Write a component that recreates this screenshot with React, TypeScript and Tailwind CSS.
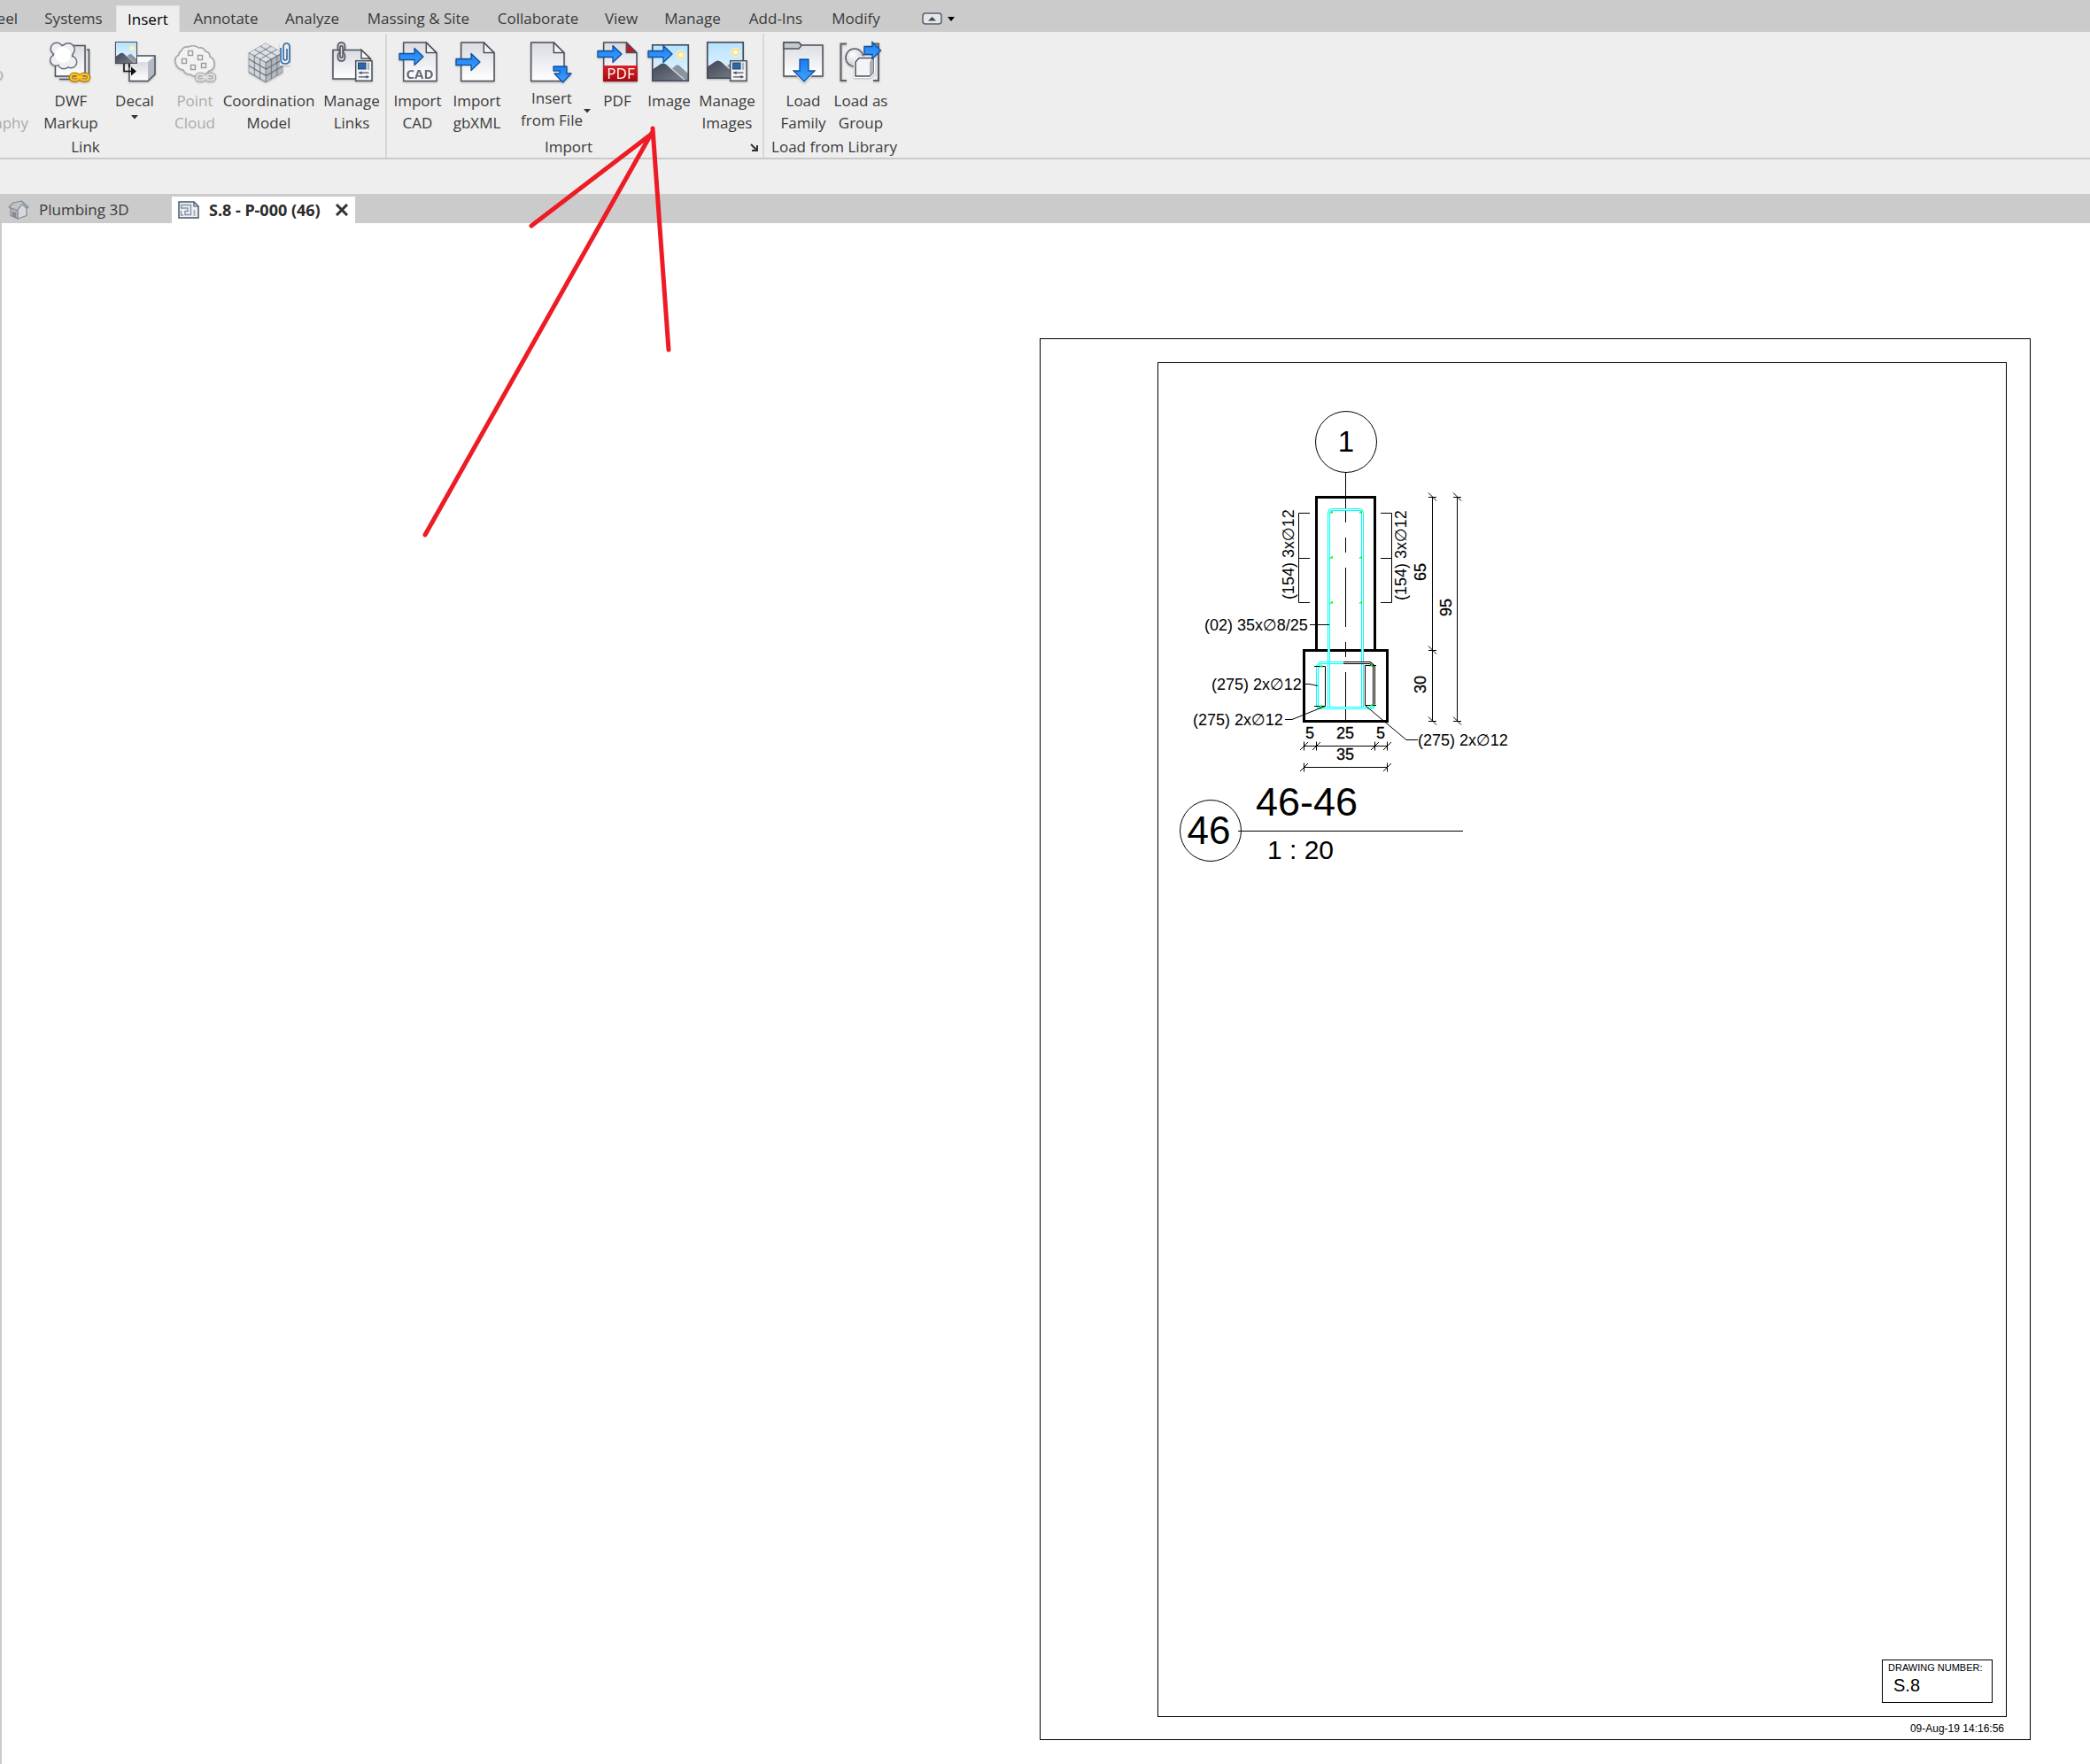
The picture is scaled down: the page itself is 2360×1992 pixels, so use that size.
import type { ReactNode } from 'react';
import { clsx } from 'clsx';

type RibbonTab = { label: string; width: string };

const ribbonTabs: RibbonTab[] = [
  { label: 'Systems', width: 'w-[96px]' },
  { label: 'Insert', width: 'w-[72px]' },
  { label: 'Annotate', width: 'w-[104px]' },
  { label: 'Analyze', width: 'w-[91px]' },
  { label: 'Massing & Site', width: 'w-[149px]' },
  { label: 'Collaborate', width: 'w-[121px]' },
  { label: 'View', width: 'w-[67px]' },
  { label: 'Manage', width: 'w-[94px]' },
  { label: 'Add-Ins', width: 'w-[94px]' },
  { label: 'Modify', width: 'w-[87px]' },
];

/* Shared gradients for the ribbon icons */
function IconDefs() {
  return (
    <svg width="0" height="0" className="absolute" aria-hidden="true">
      <defs>
        <linearGradient id="paper" x1="0" y1="0" x2="0" y2="1">
          <stop offset="0" stopColor="#d9dbe1" />
          <stop offset="1" stopColor="#ffffff" />
        </linearGradient>
        <linearGradient id="blue" x1="0" y1="0" x2="0" y2="1">
          <stop offset="0" stopColor="#1b7cf0" />
          <stop offset="1" stopColor="#3fa2ff" />
        </linearGradient>
        <linearGradient id="sky" x1="0" y1="0" x2="0" y2="1">
          <stop offset="0" stopColor="#b5e2ff" />
          <stop offset="1" stopColor="#eaf7ff" />
        </linearGradient>
        <linearGradient id="rock" x1="0" y1="0" x2="1" y2="1">
          <stop offset="0" stopColor="#3f4553" />
          <stop offset="1" stopColor="#7c828f" />
        </linearGradient>
        <linearGradient id="red" x1="0" y1="0" x2="0" y2="1">
          <stop offset="0" stopColor="#d92127" />
          <stop offset="1" stopColor="#a30c10" />
        </linearGradient>
        <radialGradient id="ball" cx="0.4" cy="0.35" r="0.7">
          <stop offset="0" stopColor="#ffffff" />
          <stop offset="1" stopColor="#c3c7d0" />
        </radialGradient>
      </defs>
    </svg>
  );
}

function Icon({ children, faded }: { children: ReactNode; faded?: boolean }) {
  return (
    <svg
      viewBox="0 0 48 48"
      aria-hidden="true"
      fill="none"
      className={clsx('size-12 shrink-0 overflow-visible drop-shadow-[0_1px_1px_rgba(0,0,0,0.25)]', faded && 'opacity-70')}
    >
      {children}
    </svg>
  );
}

function ArrowRight({ x, y }: { x: number; y: number }) {
  return (
    <path
      d="M0 6.5h17V0.5l10 9.5-10 9.5v-6H0z"
      transform={`translate(${x} ${y})`}
      fill="url(#blue)"
      stroke="#0f4f9c"
      strokeWidth="1.3"
      strokeLinejoin="round"
    />
  );
}

function Page({ x, fold = 'url(#paper)' }: { x: number; fold?: string }) {
  return (
    <g transform={`translate(${x} 0)`} stroke="#4a4f5a" strokeWidth="1.5" strokeLinejoin="round">
      <path d="M0.7 2h25.6L38 14v31.4H0.7z" fill="url(#paper)" />
      <path d="M26.3 2v11.6H38z" fill={fold} />
    </g>
  );
}

function Chain({ x, y, color, inner }: { x: number; y: number; color: string; inner: string }) {
  return (
    <g transform={`translate(${x} ${y})`}>
      <g stroke={color} strokeWidth="4.4">
        <rect x="2" y="2" width="9" height="6.5" rx="3" />
        <rect x="13" y="2" width="9" height="6.5" rx="3" />
        <path d="M8 5.2h8" />
      </g>
      <g stroke={inner} strokeWidth="2">
        <rect x="2" y="2" width="9" height="6.5" rx="3" />
        <rect x="13" y="2" width="9" height="6.5" rx="3" />
        <path d="M8 5.2h8" />
      </g>
    </g>
  );
}

function Properties({ x, y }: { x: number; y: number }) {
  return (
    <g transform={`translate(${x} ${y})`}>
      <rect x="0.7" y="0.7" width="18.3" height="22.6" fill="#f4f5f8" stroke="#4a4f5a" strokeWidth="1.5" />
      <rect x="3.5" y="3" width="8.5" height="7" fill="#2f66a8" stroke="#1d4478" />
      <path d="M15 2.8v8" stroke="#aeb3bd" strokeWidth="2.4" />
      <path d="M4 14.2h11.5M4 18.8h11.5" stroke="#4a4f5a" strokeWidth="1.2" />
      <path d="M7.5 12.2l-3 2 3 2zM12.5 16.8l3 2-3 2z" fill="#4a4f5a" />
    </g>
  );
}

function Picture({ x, y, size }: { x: number; y: number; size: number }) {
  return (
    <svg x={x} y={y} width={size} height={size} viewBox="0 0 42 42">
      <rect x="0" y="0" width="42" height="42" fill="url(#sky)" />
      <circle cx="32.5" cy="12" r="5" fill="#fff6c8" />
      <circle cx="32.5" cy="12" r="3.2" fill="#fffdf0" stroke="#ffd766" strokeWidth="1.4" />
      <path d="M20 42V30l7-6q2-1.5 4 0l11 10v8z" fill="#8e949f" />
      <path d="M0 42V29l10.5-7q3-1.5 6 1L38 42z" fill="url(#rock)" />
      <path d="M20 25.5L38 41" stroke="#d5d8dd" strokeWidth="1.3" />
      <rect x="0.8" y="0.8" width="40.4" height="40.4" fill="none" stroke="#454b58" strokeWidth="1.6" />
    </svg>
  );
}

function TopographyIcon() {
  return (
    <Icon faded>
      <path d="M4 3h15v34H4z" fill="#eeeeee" stroke="#a8a8a8" strokeWidth="1.5" />
      <Chain x={0} y={34} color="#8a8a8a" inner="#dddddd" />
    </Icon>
  );
}

function DwfIcon() {
  const lobes = [[8, 9, 6], [21, 10, 6.5], [7, 22, 5.5], [16, 25, 6], [24, 24, 6], [15, 16, 10]];
  return (
    <Icon>
      <path d="M42 10h2.5v30M11 43.5h14" stroke="#4a4f5a" strokeWidth="1.5" />
      <rect x="6.5" y="5.5" width="33.5" height="34.5" fill="url(#paper)" stroke="#4a4f5a" strokeWidth="1.5" />
      {lobes.map(([cx, cy, r]) => (
        <circle key={`line-${cx}`} cx={cx} cy={cy} r={r} stroke="#6b707b" strokeWidth="3" />
      ))}
      {lobes.map(([cx, cy, r]) => (
        <circle key={`fill-${cx}`} cx={cx} cy={cy} r={r} fill="#eef0f4" />
      ))}
      <circle cx="15" cy="16" r="9" fill="#ffffff" />
      <Chain x={22} y={36} color="#b07800" inner="#ffc52e" />
    </Icon>
  );
}

function DecalIcon() {
  return (
    <Icon>
      <path d="M18 24l8-7h21v21l-8 7.5H18z" fill="#ffffff" />
      <path d="M18 24l8-7h21l-8 7z" fill="#f8f9fb" />
      <path d="M39 24l8-7v21l-8 7.5z" fill="#b4bac5" />
      <path d="M18 24h21v21.5H18z" fill="url(#paper)" />
      <path d="M18 24l8-7h21v21l-8 7.5H18z" stroke="#4a4f5a" strokeWidth="1.5" />
      <Picture x={2} y={1} size={25} />
      <path d="M12 26v8.5h9M18 26v4" stroke="#111111" strokeWidth="1.6" />
      <path d="M20 29.5l6 5-6 5z" fill="#111111" />
    </Icon>
  );
}

function PointCloudIcon() {
  const points = [[19, 14], [30, 19], [12, 23], [22, 30], [34, 28]];
  return (
    <Icon faded>
      <path
        d="M9 11q2-5 8-4 6-3 11 1 6-1 8 4 5 1 5 6 6 3 5 9 0 6-6 7-4 6-10 4-6 4-11 0-6 0-8-5-7-1-8.5-7Q0 19 6 16q0-3 3-5z"
        fill="#f4f4f4"
        stroke="#8a8a8a"
        strokeWidth="1.6"
      />
      {points.map(([x, y]) => (
        <rect key={`${x}-${y}`} x={x - 2.5} y={y - 2.5} width="5" height="5" stroke="#777777" strokeWidth="1.4" />
      ))}
      <Chain x={24} y={36} color="#8a8a8a" inner="#dddddd" />
    </Icon>
  );
}

function CoordinationIcon() {
  const steps = [0, 1, 2];
  return (
    <Icon>
      <path d="M20 2.5l19.2 11.100v22.300L20 47 0.8 35.900V13.600z" fill="#6d727d" />
      {steps.map((i) =>
        steps.map((j) => (
          <g key={`${i}${j}`} strokeWidth="0.8" strokeLinejoin="round">
            <path d="M0-2.8L5 0 0 2.8-5 0z" fill="#dde0e5" stroke="#dde0e5" transform={`translate(${20 + (i - j) * 6.4} ${6 + (i + j) * 3.7})`} />
            <path d="M0.9 1.400l4.700 2.700v5.300L0.9 6.700z" fill="#d3d6dc" stroke="#d3d6dc" transform={`translate(${0.8 + i * 6.4} ${13.4 + i * 3.7 + j * 7.5})`} />
            <path d="M0.9 0.600l4.700-2.700v5.300L0.9 5.900z" fill="#b3b7bf" stroke="#b3b7bf" transform={`translate(${20 + i * 6.4} ${24.8 - i * 3.7 + j * 7.5})`} />
          </g>
        ))
      )}
      <path d="M36 3h11v25H36z" fill="#eeeeee" />
      <path d="M44 9v11q0 2-2 2t-2-2V7q0-4 3.5-4T47 7v14q0 5-5 5t-5-5V8" stroke="#2f66a8" strokeWidth="1.600" />
    </Icon>
  );
}

function ManageLinksIcon() {
  return (
    <Icon>
      <path d="M3 10.5h32L45 20v23H3z" fill="url(#paper)" stroke="#4a4f5a" strokeWidth="1.5" />
      <path d="M35 10.5V20h10z" fill="#ffffff" stroke="#4a4f5a" strokeWidth="1.5" />
      <g stroke="#4a4f5a" strokeWidth="1.5">
        <rect x="8.5" y="2" width="8" height="10" rx="3.5" fill="#c6c9d0" />
        <rect x="8.5" y="13" width="8" height="10" rx="3.5" fill="#c6c9d0" />
        <rect x="11" y="6" width="3" height="13" rx="1.5" fill="#e6e8ec" />
      </g>
      <Properties x={28} y={22} />
    </Icon>
  );
}

function ImportCadIcon() {
  return (
    <Icon>
      <Page x={7} />
      <text x="26" y="43" textAnchor="middle" fontSize="15" fontWeight="700" fill="#666b76">CAD</text>
      <ArrowRight x={3} y={8} />
    </Icon>
  );
}

function ImportGbxmlIcon() {
  return (
    <Icon>
      <Page x={5} />
      <ArrowRight x={0} y={14} />
    </Icon>
  );
}

function InsertFileIcon() {
  return (
    <Icon>
      <Page x={0} />
      <path d="M26 29h15v8h5l-9.5 10L27 37h6v-3h-7z" fill="url(#blue)" stroke="#0f4f9c" strokeWidth="1.3" strokeLinejoin="round" />
    </Icon>
  );
}

function PdfIcon() {
  return (
    <Icon>
      <Page x={8} fold="#c8171c" />
      <path d="M8 28h39v18H8z" fill="url(#red)" />
      <text x="28" y="43" textAnchor="middle" fontSize="17" fontWeight="500" fill="#ffffff">PDF</text>
      <ArrowRight x={2} y={5} />
    </Icon>
  );
}

function ImageIcon() {
  return (
    <Icon>
      <Picture x={4} y={4} size={42} />
      <ArrowRight x={0} y={5} />
    </Icon>
  );
}

function ManageImagesIcon() {
  return (
    <Icon>
      <Picture x={1} y={1} size={42} />
      <Properties x={27} y={22} />
    </Icon>
  );
}

function LoadFamilyIcon() {
  return (
    <Icon>
      <path d="M2 40V2h17l3 3h24v35z" fill="url(#paper)" stroke="#4a4f5a" strokeWidth="1.5" />
      <path d="M2 9h17l3-3.500-3-3.500H2z" fill="#c5c8cf" stroke="#4a4f5a" strokeWidth="1.3" />
      <path d="M20 21h10v13h7L25 46 13 34h7z" fill="url(#blue)" stroke="#ffffff" strokeWidth="3" />
      <path d="M20 21h10v13h7L25 46 13 34h7z" fill="url(#blue)" stroke="#0f4f9c" strokeWidth="1.3" />
    </Icon>
  );
}

function LoadGroupIcon() {
  return (
    <Icon>
      <path d="M8 3.5H1.5V45H8M38 3.5h6V45h-6" stroke="#5b606b" strokeWidth="2" />
      <circle cx="17" cy="19" r="10" fill="url(#ball)" stroke="#5b606b" strokeWidth="1.5" />
      <path d="M18 24l4-4.500h16V36l-4 4H18z" fill="#ffffff" stroke="#ffffff" strokeWidth="4" />
      <path d="M18 24l4-4.500h16V36l-4 4H18z" fill="#f3f4f7" stroke="#4a4f5a" strokeWidth="1.5" />
      <path d="M34 24l4-4.500V36l-4 4z" fill="#aab0bb" />
      <path d="M28 6.500h9V1.500l9.500 9.500-9.500 9.500v-5h-9z" fill="url(#blue)" stroke="#0f4f9c" strokeWidth="1.3" />
    </Icon>
  );
}

type ToolButtonProps = {
  icon: ReactNode;
  lines: string[];
  width: string;
  disabled?: boolean;
  dropdown?: boolean;
};

function Caret() {
  return (
    <svg viewBox="0 0 8 5" className="h-[5px] w-2" aria-hidden="true">
      <path d="M0 0h8L4 4.500z" fill="#333333" />
    </svg>
  );
}

function ToolButton({ icon, lines, width, disabled, dropdown }: ToolButtonProps) {
  return (
    <button
      type="button"
      disabled={disabled}
      className={clsx(
        'flex shrink-0 flex-col items-center whitespace-nowrap leading-[25px]',
        width,
        disabled ? 'text-[#ababab]' : 'text-[#3a3a3a]'
      )}
    >
      {icon}
      <span className="mt-[7px] flex flex-col items-center">
        {lines.map((line, i) => (
          <span key={i} className="h-[25px]">{line}</span>
        ))}
        {dropdown && <span className="pt-1"><Caret /></span>}
      </span>
    </button>
  );
}

type PanelProps = { title: string; className?: string; titleClass?: string; children: ReactNode; launcher?: boolean };

function Panel({ title, className, titleClass, children, launcher }: PanelProps) {
  return (
    <section aria-label={title} className={clsx('flex shrink-0 flex-col', className)}>
      <div className="flex h-[108px]">{children}</div>
      <div className="flex items-center">
        <h2 className={clsx('flex-1 text-center leading-6', titleClass)}>{title}</h2>
        {launcher && (
          <button type="button" aria-label="Import settings" className="mr-[5px]">
            <svg viewBox="0 0 9 9" className="size-[9px]" aria-hidden="true">
              <path d="M1 1l6 6M8 2v6H2" fill="none" stroke="#333333" strokeWidth="2" />
            </svg>
          </button>
        )}
      </div>
    </section>
  );
}

function Ribbon() {
  return (
    <div className="flex h-36 border-b-2 border-[#c9c9c9] bg-[#eeeeee] pt-[10px] text-[#3a3a3a]">
      <Panel title="Link" className="w-[435px]" titleClass="pr-[242px]">
        {/* Scrolled partly off the left edge */}
        <button type="button" disabled className="flex w-[46px] shrink-0 flex-col items-end overflow-hidden pr-[14px] leading-[25px] text-[#ababab]">
          <span className="pr-[5px]"><TopographyIcon /></span>
          <span className="mt-8">Topography</span>
        </button>
        <ToolButton icon={<DwfIcon />} lines={['DWF', 'Markup']} width="w-[68px]" />
        <ToolButton icon={<DecalIcon />} lines={['Decal']} width="w-[76px]" dropdown />
        <ToolButton icon={<PointCloudIcon />} lines={['Point', 'Cloud']} width="w-[60px]" disabled />
        <ToolButton icon={<CoordinationIcon />} lines={['Coordination', 'Model']} width="w-[107px]" />
        <ToolButton icon={<ManageLinksIcon />} lines={['Manage', 'Links']} width="w-[80px]" />
      </Panel>
      <div className="-mt-2 w-[2px] bg-[#d8d8d8]" />
      <Panel title="Import" className="w-[424px]" launcher>
        <ToolButton icon={<ImportCadIcon />} lines={['Import', 'CAD']} width="w-[69px]" />
        <ToolButton icon={<ImportGbxmlIcon />} lines={['Import', 'gbXML']} width="w-[65px]" />
        <div className="flex w-[104px] shrink-0 items-start justify-center">
          <button type="button" className="relative flex flex-col items-center whitespace-nowrap leading-[25px]">
            <InsertFileIcon />
            <span className="mt-1">Insert</span>
            <span>from File</span>
            <span className="absolute -right-[9px] bottom-5 flex h-[5px]"><Caret /></span>
          </button>
        </div>
        <ToolButton icon={<PdfIcon />} lines={['PDF']} width="w-[44px]" />
        <ToolButton icon={<ImageIcon />} lines={['Image']} width="w-[73px]" />
        <ToolButton icon={<ManageImagesIcon />} lines={['Manage', 'Images']} width="w-[58px]" />
      </Panel>
      <div className="-mt-2 w-[2px] bg-[#d8d8d8]" />
      <Panel title="Load from Library" className="w-[158px]">
        <div className="flex pl-3">
          <ToolButton icon={<LoadFamilyIcon />} lines={['Load', 'Family']} width="w-[64px]" />
          <ToolButton icon={<LoadGroupIcon />} lines={['Load as', 'Group']} width="w-[66px]" />
        </div>
      </Panel>
    </div>
  );
}

function RibbonTabs() {
  return (
    <nav aria-label="Ribbon" className="flex h-9 items-end overflow-hidden bg-[#cbcbcb] text-[#3a3a3a]">
      <button type="button" className="flex h-[30px] w-[35px] shrink-0 items-center justify-end overflow-hidden pr-[15px]">Steel</button>
      {ribbonTabs.map(({ label, width }) => (
        <button
          key={label}
          type="button"
          aria-current={label === 'Insert' ? 'page' : undefined}
          className={clsx(
            'flex h-[30px] shrink-0 items-center justify-center whitespace-nowrap',
            width,
            label === 'Insert' && 'border border-b-0 border-[#e2e2e2] bg-[#eeeeee] text-black'
          )}
        >
          {label}
        </button>
      ))}
      <button type="button" aria-label="Minimize ribbon" className="ml-[31px] flex h-[30px] items-center gap-[6px]">
        <svg viewBox="0 0 23 14" className="h-[14px] w-[23px]" aria-hidden="true">
          <rect x="1" y="1" width="21" height="12" rx="3" fill="#e4e6ea" stroke="#5b606b" strokeWidth="1.5" />
          <path d="M7 9.500h9L11.500 5z" fill="#3f4553" />
        </svg>
        <svg viewBox="0 0 8 5" className="h-[5px] w-2" aria-hidden="true">
          <path d="M0 0h8L4 5z" fill="#000000" />
        </svg>
      </button>
    </nav>
  );
}

function DocumentTabs() {
  return (
    <nav aria-label="Open views" className="flex h-[33px] items-end bg-[#cbcbcb] text-[#3a3a3a]">
      <button type="button" className="flex h-[30px] w-[194px] items-center gap-[11px] pl-[9px]">
        <svg viewBox="0 0 24 22" className="h-[22px] w-6" aria-hidden="true" stroke="#85888f" strokeWidth="1.2" strokeLinejoin="round">
          <path d="M3 9v8.500l8 3.500V11z" fill="#b4b8bf" />
          <path d="M11 21l10-3.500V8l-5-4-5 7z" fill="#d6d9de" />
          <path d="M1 8l5-5 9.500-2L23 8l-2 1-5-4.500-5.500 7z" fill="#bfc3ca" />
          <path d="M5.500 18.500v-5l3 1v5.500" fill="#8d9199" />
        </svg>
        Plumbing 3D
      </button>
      <div className="flex h-[30px] items-center bg-white pl-[7px] pr-[7px]">
        <button type="button" aria-current="page" className="flex items-center gap-[11px] font-['Noto_Sans','Open_Sans',sans-serif] text-lg font-bold leading-6 text-[#2b2b2b]">
          <svg viewBox="0 0 24 20" className="h-5 w-6" aria-hidden="true" fill="none">
            <path d="M1 1h17l5 5v13H1z" fill="#eef1f5" stroke="#4a5568" strokeWidth="1.5" />
            <path d="M18 1v5h5" stroke="#4a5568" strokeWidth="1.2" />
            <path d="M3.500 4.500h11v11H8v-4h3V8H3.500zM3.500 11v5H6" stroke="#8193ad" strokeWidth="1.4" />
            <path d="M18.500 10v7" stroke="#a9b3c2" strokeWidth="2" />
          </svg>
          S.8 - P-000 (46)
        </button>
        <button type="button" aria-label="Close view" className="ml-4">
          <svg viewBox="0 0 16 14" className="h-[14px] w-4" aria-hidden="true">
            <path d="M2 1l12 12M14 1L2 13" stroke="#333333" strokeWidth="3" />
          </svg>
        </button>
      </div>
    </nav>
  );
}

/* Concrete section 46-46: column on footing with rebar, dimensions and tags */
function SectionDetail() {
  const rebar = [[203, 138], [236, 138], [203, 189], [236, 189], [203, 240], [236, 240], [191, 312], [248, 311], [191, 357], [248, 356]];
  const levels = [[317.5, 121.5], [317.5, 294.5], [317.5, 374.5], [345.5, 121.5], [345.5, 374.5]];
  const widths = [[172.5, 402.5], [186.5, 402.5], [252.5, 402.5], [266.5, 402.5], [172.5, 426.5], [266.5, 426.5]];
  return (
    <svg
      viewBox="8 -30 420 620"
      width="420"
      height="620"
      role="img"
      aria-label="Section 46-46"
      className="font-['Liberation_Sans',Arial,'DejaVu_Sans',sans-serif]"
      fill="none"
      stroke="#000000"
    >
      {/* Grid bubble and axis */}
      <circle cx="220" cy="59" r="34.5" />
      <path d="M219.5 94v56M219.5 167v17M219.5 201v67M219.5 285v17M219.5 319v55" />

      {/* Concrete outline */}
      <path d="M186.5 294.5v-173h66v173M172.5 294.5h94v80h-94z" strokeWidth="3" />

      {/* Column stirrup */}
      <path d="M200.5 360V140q0-4.500 4.500-4.500h29q4.500 0 4.500 4.500v220" stroke="#00ffff" strokeWidth="3" />
      <path d="M200.5 360V140q0-4.500 4.500-4.500h29q4.500 0 4.500 4.500v220" stroke="#ffffff" />

      {/* Footing stirrup */}
      <path d="M217 308.5h-26l-3.500 4v43q0 4 4 4h56q4 0 4-4" stroke="#00ffff" strokeWidth="3" />
      <path d="M217 308.5h-26l-3.500 4v43q0 4 4 4h56q4 0 4-4" stroke="#ffffff" />
      <path d="M217 308.5h30l4.500 4v43" strokeWidth="3" />
      <path d="M217 308.5h30l4.500 4v43" stroke="#ffffff" />
      <path d="M184 312.5h12.500v45H184M254 311.5h-12.500v45H254" />

      {rebar.map(([x, y]) => (
        <path key={`${x}-${y}`} d={`M${x - 2} ${y + 1.5}h4v-3z`} fill="#00ff00" stroke="none" />
      ))}

      {/* Rebar brackets and leaders */}
      <path d="M179 139.5h-12.500v101H179M166.5 190.5H179" />
      <path d="M259 139.5h12.500v101H259M271.5 190.5H259" />
      <path d="M179 265.5h22M173 332.5h6l9 2M151 372.5h8l37-15M301 395.5h-13L242 357" />

      {/* Dimension lines */}
      <path d="M317.5 121v254M345.5 121v254M172 402.5h95M172 426.5h95" />
      {levels.map(([x, y]) => (
        <path key={`${x}-${y}`} d={`M${x - 4.5} ${y}h9M${x - 4.5} ${y - 5}l9 9`} />
      ))}
      {widths.map(([x, y]) => (
        <path key={`${x}-${y}`} d={`M${x} ${y - 5}v10M${x - 4.5} ${y + 4.5}l9-9`} />
      ))}

      {/* View title */}
      <circle cx="67" cy="498" r="34.5" />
      <path d="M98 498.5h254" />

      <g fill="#000000" stroke="none" fontSize="18">
        <text x="60" y="272">(02) 35x∅8/25</text>
        <text x="68" y="339">(275) 2x∅12</text>
        <text x="47" y="379">(275) 2x∅12</text>
        <text x="301" y="402">(275) 2x∅12</text>
        <text transform="translate(161 237) rotate(-90)">(154) 3x∅12</text>
        <text transform="translate(288 238) rotate(-90)">(154) 3x∅12</text>
        <text x="220" y="70" fontSize="33" textAnchor="middle">1</text>
        <text x="65" y="513" fontSize="44" textAnchor="middle">46</text>
        <text x="118" y="481" fontSize="45">46-46</text>
        <text x="131" y="530" fontSize="30">1 : 20</text>
      </g>
      <g fill="#000000" strokeWidth="0.3" fontSize="18" textAnchor="middle">
        <text x="179" y="394">5</text>
        <text x="219" y="394">25</text>
        <text x="259" y="394">5</text>
        <text x="219" y="418">35</text>
        <text transform="translate(310 206) rotate(-90)">65</text>
        <text transform="translate(339 246) rotate(-90)">95</text>
        <text transform="translate(310 333) rotate(-90)">30</text>
      </g>
    </svg>
  );
}

function Sheet() {
  return (
    <article
      aria-label="Sheet S.8"
      className="flex h-[1583px] w-[1119px] shrink-0 flex-col border border-black bg-white pl-[132px] pr-[26px] pt-[26px] font-['Liberation_Sans',Arial,sans-serif] text-black"
    >
      <div className="flex h-[1530px] flex-col justify-between border border-black">
        <SectionDetail />
        <div className="mb-[15px] mr-[15px] h-[49px] w-[125px] self-end border border-black pl-[6px] pt-[2px]">
          <p className="whitespace-nowrap text-[11px] leading-3">DRAWING NUMBER:</p>
          <p className="pl-[6px] pt-[2px] text-xl leading-6">S.8</p>
        </div>
      </div>
      <time className="pr-[3px] pt-[5px] text-right text-xs leading-4">09-Aug-19 14:16:56</time>
    </article>
  );
}

function ArrowMarkup() {
  return (
    <svg
      viewBox="470 135 300 480"
      width="300"
      height="480"
      aria-hidden="true"
      className="pointer-events-none absolute left-[470px] top-[135px]"
      fill="none"
      stroke="#ed1c24"
      strokeWidth="5"
      strokeLinecap="round"
    >
      <path d="M480 604L736 150M600 255l136-104M755 395L737 145" />
    </svg>
  );
}

export default function App() {
  return (
    <div className="relative flex min-h-screen flex-col overflow-hidden bg-white font-['Open_Sans','Noto_Sans',sans-serif] text-[17px]">
      <IconDefs />
      <header>
        <RibbonTabs />
        <Ribbon />
        <div className="h-[39px] bg-[#eeeeee]" />
        <DocumentTabs />
      </header>
      <main className="flex flex-1 justify-end border-l-2 border-[#cbcbcb] pb-[27px] pr-[67px] pt-[130px]">
        <Sheet />
      </main>
      <ArrowMarkup />
    </div>
  );
}
